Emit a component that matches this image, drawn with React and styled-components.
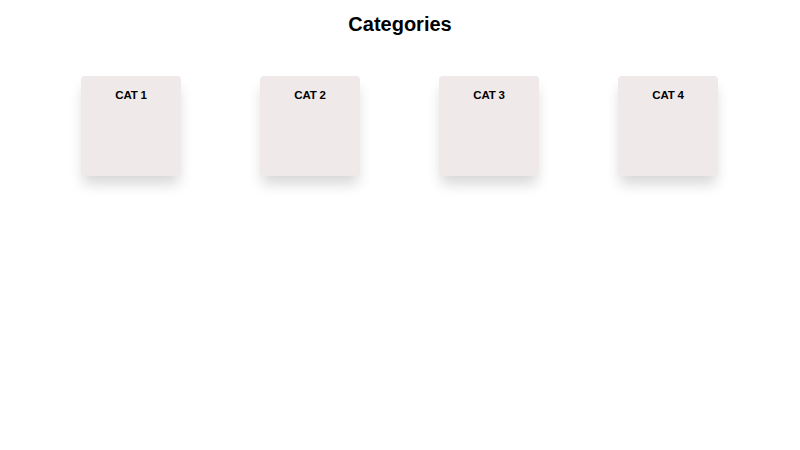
import React from "react";
import styled, { createGlobalStyle } from "styled-components";

const GlobalStyle = createGlobalStyle`
  html, body {
    margin: 0;
    padding: 0;
    background: #ffffff;
    font-family: "Liberation Sans", Arial, sans-serif;
    color: #000;
  }
`;

const Page = styled.main`
  min-height: 100vh;
  box-sizing: border-box;
  display: flex;
  flex-direction: column;
  align-items: center;
  padding: 12px 0 40px;
`;

const Title = styled.h1`
  margin: 0;
  font-size: 20px;
  font-weight: 700;
  line-height: 24px;
`;

const CardRow = styled.div`
  display: flex;
  justify-content: center;
  gap: 79px;
  margin-top: 40px;
  margin-left: -1px;
`;

const Card = styled.div`
  width: 100px;
  height: 100px;
  box-sizing: border-box;
  background: #efe9e9;
  border-radius: 4px;
  box-shadow: 0 10px 14px -2px rgba(0, 0, 0, 0.16);
  display: flex;
  justify-content: center;
  padding-top: 12px;
`;

const CardLabel = styled.span`
  font-size: 11.5px;
  font-weight: 700;
  line-height: 14px;
  letter-spacing: -0.2px;
`;

const categories = ["CAT 1", "CAT 2", "CAT 3", "CAT 4"];

export default function App() {
  return (
    <>
      <GlobalStyle />
      <Page>
        <Title>Categories</Title>
        <CardRow>
          {categories.map((c) => (
            <Card key={c}>
              <CardLabel>{c}</CardLabel>
            </Card>
          ))}
        </CardRow>
      </Page>
    </>
  );
}
